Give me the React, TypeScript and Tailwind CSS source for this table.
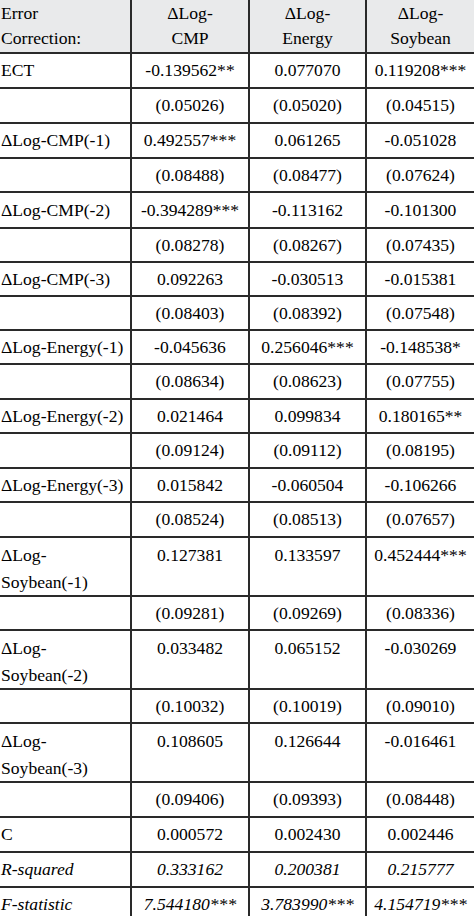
import React from "react";

type Row = {
  label: React.ReactNode;
  vals: string[];
  h: string;
  two?: boolean;
  italic?: boolean;
};

const rows: Row[] = [
  { label: "ECT", vals: ["-0.139562**", "0.077070", "0.119208***"], h: "h-[35px]" },
  { label: "", vals: ["(0.05026)", "(0.05020)", "(0.04515)"], h: "h-[35px]" },
  { label: "ΔLog-CMP(-1)", vals: ["0.492557***", "0.061265", "-0.051028"], h: "h-[35px]" },
  { label: "", vals: ["(0.08488)", "(0.08477)", "(0.07624)"], h: "h-[34px]" },
  { label: "ΔLog-CMP(-2)", vals: ["-0.394289***", "-0.113162", "-0.101300"], h: "h-[36px]" },
  { label: "", vals: ["(0.08278)", "(0.08267)", "(0.07435)"], h: "h-[34px]" },
  { label: "ΔLog-CMP(-3)", vals: ["0.092263", "-0.030513", "-0.015381"], h: "h-[34px]" },
  { label: "", vals: ["(0.08403)", "(0.08392)", "(0.07548)"], h: "h-[34px]" },
  { label: "ΔLog-Energy(-1)", vals: ["-0.045636", "0.256046***", "-0.148538*"], h: "h-[34px]" },
  { label: "", vals: ["(0.08634)", "(0.08623)", "(0.07755)"], h: "h-[35px]" },
  { label: "ΔLog-Energy(-2)", vals: ["0.021464", "0.099834", "0.180165**"], h: "h-[34px]" },
  { label: "", vals: ["(0.09124)", "(0.09112)", "(0.08195)"], h: "h-[35px]" },
  { label: "ΔLog-Energy(-3)", vals: ["0.015842", "-0.060504", "-0.106266"], h: "h-[34px]" },
  { label: "", vals: ["(0.08524)", "(0.08513)", "(0.07657)"], h: "h-[35px]" },
  { label: ["ΔLog-", "Soybean(-1)"], vals: ["0.127381", "0.133597", "0.452444***"], h: "h-[59px]", two: true },
  { label: "", vals: ["(0.09281)", "(0.09269)", "(0.08336)"], h: "h-[34px]" },
  { label: ["ΔLog-", "Soybean(-2)"], vals: ["0.033482", "0.065152", "-0.030269"], h: "h-[59px]", two: true },
  { label: "", vals: ["(0.10032)", "(0.10019)", "(0.09010)"], h: "h-[34px]" },
  { label: ["ΔLog-", "Soybean(-3)"], vals: ["0.108605", "0.126644", "-0.016461"], h: "h-[59px]", two: true },
  { label: "", vals: ["(0.09406)", "(0.09393)", "(0.08448)"], h: "h-[35px]" },
  { label: "C", vals: ["0.000572", "0.002430", "0.002446"], h: "h-[35px]" },
  { label: "R-squared", vals: ["0.333162", "0.200381", "0.215777"], h: "h-[35px]", italic: true },
  { label: "F-statistic", vals: ["7.544180***", "3.783990***", "4.154719***"], h: "h-[35px]", italic: true },
];

const colW = ["w-[132px]", "w-[118px]", "w-[117px]", "w-[107px]"];

export default function App() {
  return (
    <div
      className="w-[474px] h-[916px] overflow-hidden bg-white text-black text-[17.6px]"
      style={{ fontFamily: '"Liberation Serif", "Times New Roman", serif' }}
    >
      <div className="flex h-[54px] bg-[#e9eaeb] border-b-2 border-[#2a2a2a] leading-[25.5px]">
        <div className={`${colW[0]} border-r-2 border-[#2a2a2a] flex flex-col justify-center pl-[1px]`}>
          <span>Error</span>
          <span>Correction:</span>
        </div>
        <div className={`${colW[1]} border-r-2 border-[#2a2a2a] flex flex-col justify-center items-center`}>
          <span>ΔLog-</span>
          <span>CMP</span>
        </div>
        <div className={`${colW[2]} border-r-2 border-[#2a2a2a] flex flex-col justify-center items-center`}>
          <span>ΔLog-</span>
          <span>Energy</span>
        </div>
        <div className={`${colW[3]} flex flex-col justify-center items-center`}>
          <span>ΔLog-</span>
          <span>Soybean</span>
        </div>
      </div>
      {rows.map((r, i) => (
        <div
          key={i}
          className={`flex ${r.h} border-b-2 border-[#2a2a2a] ${r.italic ? "italic" : ""}`}
        >
          <div
            className={`${colW[0]} shrink-0 border-r-2 border-[#2a2a2a] pl-[1px] flex ${
              r.two ? "flex-col pt-[4px] leading-[27px]" : "items-center"
            }`}
          >
            {Array.isArray(r.label) ? (
              <>
                <span>{r.label[0]}</span>
                <span>{r.label[1]}</span>
              </>
            ) : (
              <span>{r.label}</span>
            )}
          </div>
          {r.vals.map((v, j) => (
            <div
              key={j}
              className={`${colW[j + 1]} shrink-0 ${j < 2 ? "border-r-2 border-[#2a2a2a]" : ""} flex justify-center whitespace-nowrap ${
                r.two ? "pt-[4px] leading-[27px] items-start" : "items-center"
              }`}
            >
              {v}
            </div>
          ))}
        </div>
      ))}
    </div>
  );
}
